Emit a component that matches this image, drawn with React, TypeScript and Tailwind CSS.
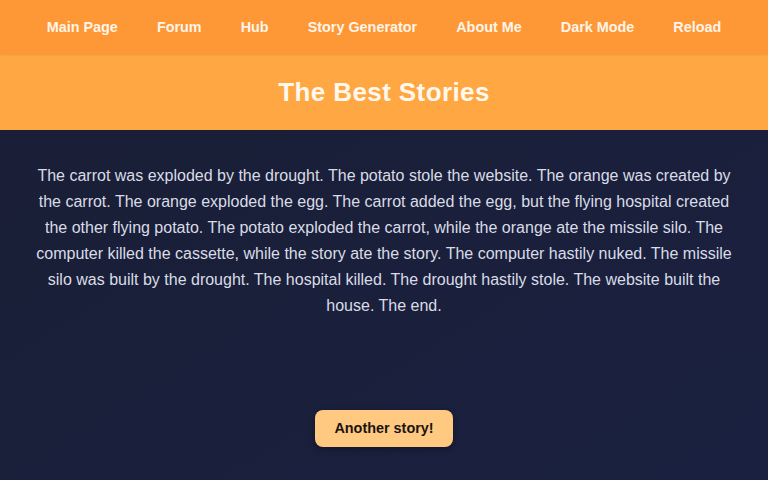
const NAV = ['Main Page', 'Forum', 'Hub', 'Story Generator', 'About Me', 'Dark Mode', 'Reload']

const STORY =
  'The carrot was exploded by the drought. The potato stole the website. The orange was created by the carrot. The orange exploded the egg. The carrot added the egg, but the flying hospital created the other flying potato. The potato exploded the carrot, while the orange ate the missile silo. The computer killed the cassette, while the story ate the story. The computer hastily nuked. The missile silo was built by the drought. The hospital killed. The drought hastily stole. The website built the house. The end.'

export default function App() {
  return (
    <div className="min-h-[480px] flex flex-col bg-gradient-to-br from-[#1a1e35] to-[#1a2140] font-['Liberation_Sans',Arial,sans-serif]">
      <nav className="h-[54px] bg-[#fe9735] flex items-center justify-center gap-[39px] shadow-[0_1px_2px_rgba(0,0,0,0.08)] relative z-10">
        {NAV.map((item) => (
          <a key={item} href="#" className="text-[14.4px] font-bold text-[#fff4e8] pt-px">
            {item}
          </a>
        ))}
      </nav>

      <header className="h-[76px] bg-[#ffa742] flex items-center justify-center">
        <h1 className="text-[26px] font-bold text-[#fff8ee] tracking-[0.4px]">The Best Stories</h1>
      </header>

      <main className="flex flex-col items-center px-[34px] pt-[33px]">
        <p className="text-[16px] leading-[26px] text-[#d9dce6] text-center">{STORY}</p>
        <button className="mt-[91px] h-[37px] px-[19px] rounded-lg bg-[#ffc981] text-[14.4px] font-bold text-[#1a1410] shadow-[0_2px_6px_rgba(0,0,0,0.35)]">
          Another story!
        </button>
      </main>
    </div>
  )
}
